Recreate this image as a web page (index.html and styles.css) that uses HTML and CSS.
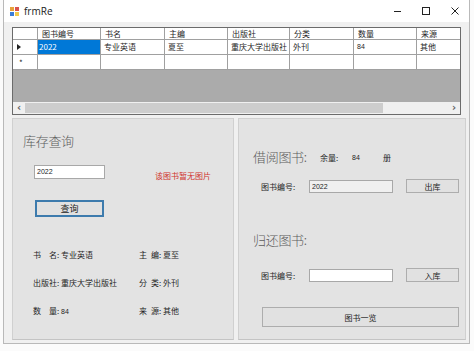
FILE: index.html
```html
<!DOCTYPE html>
<html lang="zh-CN">
<head>
    <meta charset="UTF-8">
    <title>frmRe</title>
    <link rel="stylesheet" href="styles.css">
</head>
<body>

<div class="window">
    <div class="titlebar">
        <svg class="app-icon" width="9" height="9" viewBox="0 0 9 9">
            <rect x="0" y="0" width="4" height="4" fill="#e8a23a"/>
            <rect x="5" y="0" width="4" height="4" fill="#d9534f"/>
            <rect x="0" y="5" width="4" height="4" fill="#3b7dd8"/>
            <rect x="5" y="5" width="4" height="4" fill="#f2c94c"/>
        </svg>
        <span class="title">frmRe</span>
        <div class="controls">
            <div class="ctl ctl-min">
                <svg width="8" height="8" viewBox="0 0 8 8"><path d="M0 4.5H7" stroke="#222" stroke-width="1"/></svg>
            </div>
            <div class="ctl ctl-max">
                <svg width="8" height="8" viewBox="0 0 8 8"><rect x="0.5" y="0.5" width="7" height="7" fill="none" stroke="#222" stroke-width="1"/></svg>
            </div>
            <div class="ctl ctl-close">
                <svg width="8" height="8" viewBox="0 0 8 8"><path d="M0.5 0.5L7.5 7.5M7.5 0.5L0.5 7.5" stroke="#222" stroke-width="1"/></svg>
            </div>
        </div>
    </div>

    <div class="form">
        <div class="grid">
            <div class="row head">
                <div class="cell rh"></div>
                <div class="cell">图书编号</div>
                <div class="cell">书名</div>
                <div class="cell">主编</div>
                <div class="cell">出版社</div>
                <div class="cell">分类</div>
                <div class="cell">数量</div>
                <div class="cell">来源</div>
            </div>
            <div class="row">
                <div class="cell rh"><span class="cur"></span></div>
                <div class="cell sel">2022</div>
                <div class="cell">专业英语</div>
                <div class="cell">夏至</div>
                <div class="cell">重庆大学出版社</div>
                <div class="cell">外刊</div>
                <div class="cell num">84</div>
                <div class="cell">其他</div>
            </div>
            <div class="row">
                <div class="cell rh star">*</div>
                <div class="cell"></div>
                <div class="cell"></div>
                <div class="cell"></div>
                <div class="cell"></div>
                <div class="cell"></div>
                <div class="cell"></div>
                <div class="cell"></div>
            </div>
            <div class="grid-empty"></div>
            <div class="hscroll">
                <span class="arrow">&lsaquo;</span>
                <div class="thumb"></div>
                <span class="arrow right">&rsaquo;</span>
            </div>
        </div>

        <div class="panels">
            <div class="panel left">
                <div class="big-title">库存查询</div>
                <div class="search-row">
                    <div class="textbox search-box">2022</div>
                    <span class="no-pic">该图书暂无图片</span>
                </div>
                <button type="button" class="btn btn-query">查询</button>
                <div class="info">
                    <div class="info-row">
                        <div class="info-l"><span class="lab">书名</span>: 专业英语</div>
                        <div class="info-r"><span class="lab short">主编</span>: 夏至</div>
                    </div>
                    <div class="info-row">
                        <div class="info-l"><span class="lab">出版社</span>: 重庆大学出版社</div>
                        <div class="info-r"><span class="lab short">分类</span>: 外刊</div>
                    </div>
                    <div class="info-row">
                        <div class="info-l"><span class="lab">数量</span>: <span class="num">84</span></div>
                        <div class="info-r"><span class="lab short">来源</span>: 其他</div>
                    </div>
                </div>
            </div>

            <div class="panel right">
                <div class="lend-head">
                    <span class="big-title mid">借阅图书:</span>
                    <span class="left-lab">余量:</span>
                    <span class="left-num num">84</span>
                    <span>册</span>
                </div>
                <div class="op-row">
                    <span class="op-lab">图书编号:</span>
                    <div class="textbox op-box readonly">2022</div>
                    <button type="button" class="btn btn-op">出库</button>
                </div>
                <div class="big-title mid return-title">归还图书:</div>
                <div class="op-row second">
                    <span class="op-lab">图书编号:</span>
                    <div class="textbox op-box"></div>
                    <button type="button" class="btn btn-op">入库</button>
                </div>
                <button type="button" class="btn btn-list">图书一览</button>
            </div>
        </div>
    </div>
</div>

</body>
</html>
```

FILE: styles.css
```css
body {
    margin: 0;
    padding: 0;
    background-color: #fbfbfb;
    font-family: "Noto Sans CJK SC", "Noto Sans", sans-serif;
    font-size: 8px;
    color: #1e1e1e;
}
.window {
    box-sizing: border-box;
    margin-left: 3px;
    width: 467px;
    height: 344px;
    border: 1px solid #b9b9b9;
    border-top: none;
    background-color: #f0f0f0;
}
.titlebar {
    display: flex;
    align-items: center;
    height: 22px;
    background-color: #ffffff;
}
.app-icon {
    margin-left: 6px;
}
.title {
    margin-left: 5px;
    font-family: "Open Sans", "Noto Sans", sans-serif;
    font-size: 10px;
    color: #222;
}
.controls {
    display: flex;
    margin-left: auto;
    height: 22px;
}
.ctl {
    display: flex;
    align-items: center;
    justify-content: center;
    width: 29px;
}
.ctl-min {
    width: 27px;
}
.form {
    padding: 5px 0 0 8px;
}

/* data grid */
.grid {
    box-sizing: border-box;
    width: 449px;
    border: 1px solid #6b6b6b;
    background-color: #ffffff;
}
.row {
    display: grid;
    grid-template-columns: 25px 63px 64px 63px 62px 64px 63px 1fr;
    height: 15px;
    border-bottom: 1px solid #a0a0a0;
    box-sizing: border-box;
}
.row.head {
    height: 12px;
}
.cell {
    box-sizing: border-box;
    border-right: 1px solid #a0a0a0;
    padding-left: 3px;
    line-height: 13px;
    white-space: nowrap;
    overflow: hidden;
}
.row.head .cell {
    line-height: 11px;
    padding-left: 4px;
}
.cell:last-child {
    border-right: none;
}
.cell.rh {
    display: flex;
    align-items: center;
    padding-left: 4px;
}
.cur {
    width: 0;
    height: 0;
    border-top: 3px solid transparent;
    border-bottom: 3px solid transparent;
    border-left: 4px solid #222;
}
.cell.star {
    padding-left: 6px;
    font-size: 8px;
    line-height: 15px;
}
.cell.sel {
    background-color: #0078d7;
    color: #ffffff;
    padding-left: 1px;
}
.num {
    font-family: "Liberation Sans", sans-serif;
    font-size: 7px;
}
.grid-empty {
    height: 32px;
    background-color: #ababab;
}
.hscroll {
    display: flex;
    align-items: center;
    height: 12px;
    background-color: #f0f0f0;
}
.arrow {
    width: 12px;
    text-align: center;
    font-family: "DejaVu Sans", sans-serif;
    font-size: 10px;
    font-weight: bold;
    line-height: 10px;
    color: #606060;
}
.arrow.right {
    margin-left: auto;
}
.thumb {
    width: 358px;
    height: 10px;
    background-color: #cdcdcd;
}

/* lower panels */
.panels {
    display: flex;
    gap: 4px;
    margin-top: 3px;
}
.panel {
    box-sizing: border-box;
    height: 222px;
    background-color: #e3e3e3;
    border: 1px solid #d0d0d0;
    border-bottom-color: #c4c4c4;
}
.panel.left {
    width: 222px;
    padding: 14px 0 0 10px;
}
.panel.right {
    width: 228px;
    padding: 30px 0 0 14px;
}
.big-title {
    font-size: 13px;
    font-weight: 300;
    line-height: 16px;
    color: #5c5c5c;
    letter-spacing: -0.3px;
}
.textbox {
    box-sizing: border-box;
    border: 1px solid #a8a8a8;
    background-color: #ffffff;
    padding-left: 2px;
    line-height: 12px;
    font-family: "Liberation Sans", sans-serif;
    font-size: 7px;
    color: #1e1e1e;
}
.search-row {
    display: flex;
    align-items: flex-start;
    margin-top: 16px;
}
.search-box {
    width: 71px;
    height: 14px;
    margin-left: 11px;
}
.no-pic {
    margin-left: 50px;
    margin-top: 6px;
    line-height: 10px;
    color: #d0312d;
}
.btn {
    display: block;
    box-sizing: border-box;
    padding: 0;
    border: 1px solid #adadad;
    background-color: #e1e1e1;
    font-family: "Noto Sans CJK SC", sans-serif;
    font-size: 8px;
    color: #1e1e1e;
}
.btn-query {
    width: 69px;
    height: 17px;
    margin: 19px 0 0 12px;
    border: 2px solid #3d7bad;
    font-size: 9px;
}
.info {
    margin: 24px 0 0 10px;
}
.info-row {
    display: flex;
    height: 28px;
    line-height: 28px;
}
.info-l {
    width: 106px;
}
.lab {
    display: inline-block;
    width: 24px;
    text-align-last: justify;
}
.lab.short {
    width: 20px;
}

.lend-head {
    display: flex;
    align-items: center;
    height: 16px;
}
.lend-head .big-title {
    width: 67px;
}
.left-lab {
    width: 32px;
}
.left-num {
    width: 31px;
    color: #1e1e1e;
}
.op-row {
    display: flex;
    align-items: center;
    margin: 14px 0 0 8px;
    height: 14px;
}
.op-row.second {
    margin-top: 20px;
}
.op-lab {
    width: 48px;
}
.op-box {
    width: 84px;
    height: 13px;
}
.op-box.readonly {
    background-color: #f0f0f0;
}
.btn-op {
    width: 53px;
    height: 14px;
    margin-left: 13px;
}
.return-title {
    margin-top: 39px;
}
.btn-list {
    width: 197px;
    height: 20px;
    margin: 25px 0 0 9px;
}
```
